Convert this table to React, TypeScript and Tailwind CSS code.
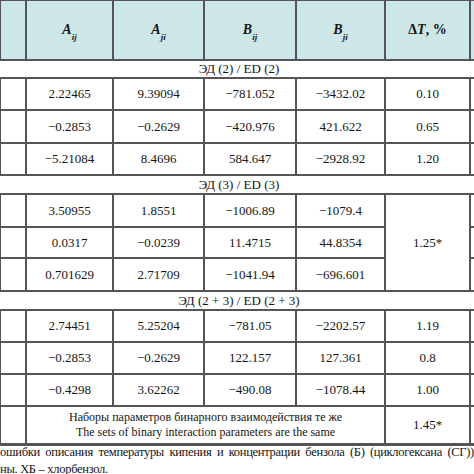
import React from 'react';

type Row = string[];

const groups: { title: string; rows: Row[]; merged?: string }[] = [
  {
    title: 'ЭД (2) / ED (2)',
    rows: [
      ['2.22465', '9.39094', '−781.052', '−3432.02', '0.10'],
      ['−0.2853', '−0.2629', '−420.976', '421.622', '0.65'],
      ['−5.21084', '8.4696', '584.647', '−2928.92', '1.20'],
    ],
  },
  {
    title: 'ЭД (3) / ED (3)',
    merged: '1.25*',
    rows: [
      ['3.50955', '1.8551', '−1006.89', '−1079.4'],
      ['0.0317', '−0.0239', '11.4715', '44.8354'],
      ['0.701629', '2.71709', '−1041.94', '−696.601'],
    ],
  },
  {
    title: 'ЭД (2 + 3) / ED (2 + 3)',
    rows: [
      ['2.74451', '5.25204', '−781.05', '−2202.57', '1.19'],
      ['−0.2853', '−0.2629', '122.157', '127.361', '0.8'],
      ['−0.4298', '3.62262', '−490.08', '−1078.44', '1.00'],
    ],
  },
];

const rowHeights = [
  ['h-[32px]', 'h-[33px]', 'h-[32px]'],
  ['h-[33px]', 'h-[31px]', 'h-[33px]'],
  ['h-[32px]', 'h-[32px]', 'h-[32px]'],
];

const cell = 'border-2 border-[#555] text-center align-middle p-0';

const Sym: React.FC<{ base: string; sub: string }> = ({ base, sub }) => (
  <span className="font-bold italic text-[14px]">
    {base}
    <sub className="text-[9px] align-[-4px]">{sub}</sub>
  </span>
);

const footnote = 'ошибки описания температуры кипения и концентрации бензола (Б) (циклогексана (СГ))';

export default function App() {
  return (
    <div className="w-[474px] h-[474px] overflow-hidden bg-white text-[#161616] text-[13px] leading-[16px] font-['Liberation_Serif','DejaVu_Serif',serif]">
      <table className="table-fixed border-collapse w-[478px] -ml-[1px] -mt-[1px]">
        <colgroup>
          <col className="w-[26px]" />
          <col className="w-[87px]" />
          <col className="w-[91px]" />
          <col className="w-[92px]" />
          <col className="w-[89px]" />
          <col className="w-[85px]" />
          <col className="w-[8px]" />
        </colgroup>
        <tbody>
          <tr className="h-[60px] bg-[#cde7e9]">
            <td className={cell}></td>
            <td className={cell}><Sym base="A" sub="ij" /></td>
            <td className={cell}><Sym base="A" sub="ji" /></td>
            <td className={cell}><Sym base="B" sub="ij" /></td>
            <td className={cell}><Sym base="B" sub="ji" /></td>
            <td className={cell}>
              <span className="font-bold text-[14px]">
                Δ<span className="italic">T</span>, %
              </span>
            </td>
            <td className={cell}></td>
          </tr>
          {groups.map((g, gi) => (
            <React.Fragment key={g.title}>
              <tr className={gi === 0 ? 'h-[18px]' : 'h-[19px]'}>
                <td colSpan={7} className="border-y-2 border-[#555] text-center p-0 leading-[14px]">
                  {g.title}
                </td>
              </tr>
              {g.rows.map((r, ri) => (
                <tr key={ri} className={rowHeights[gi][ri]}>
                  <td className={cell}></td>
                  {r.map((v, ci) => (
                    <td key={ci} className={cell}>{v}</td>
                  ))}
                  {g.merged && ri === 0 && (
                    <td rowSpan={3} className={cell}>{g.merged}</td>
                  )}
                  <td className={cell}></td>
                </tr>
              ))}
            </React.Fragment>
          ))}
          <tr className="h-[38px]">
            <td className="border-2 border-b-[3px] border-[#555] p-0"></td>
            <td colSpan={4} className="border-2 border-b-[3px] border-[#555] text-center p-0 text-[12px] leading-[15px]">
              Наборы параметров бинарного взаимодействия те же
              <br />
              The sets of binary interaction parameters are the same
            </td>
            <td className="border-2 border-b-[3px] border-[#555] text-center p-0">1.45*</td>
            <td className="border-2 border-b-[3px] border-[#555] p-0"></td>
          </tr>
        </tbody>
      </table>
      <div className="text-[12.5px] tracking-[-0.3px] leading-[17px] -mt-[2px] w-[474px]">
        <div className="flex justify-between whitespace-nowrap">
          {footnote.split(' ').map((w, i) => (
            <span key={i}>{w}</span>
          ))}
        </div>
        <div>ны. ХБ – хлорбензол.</div>
      </div>
    </div>
  );
}
